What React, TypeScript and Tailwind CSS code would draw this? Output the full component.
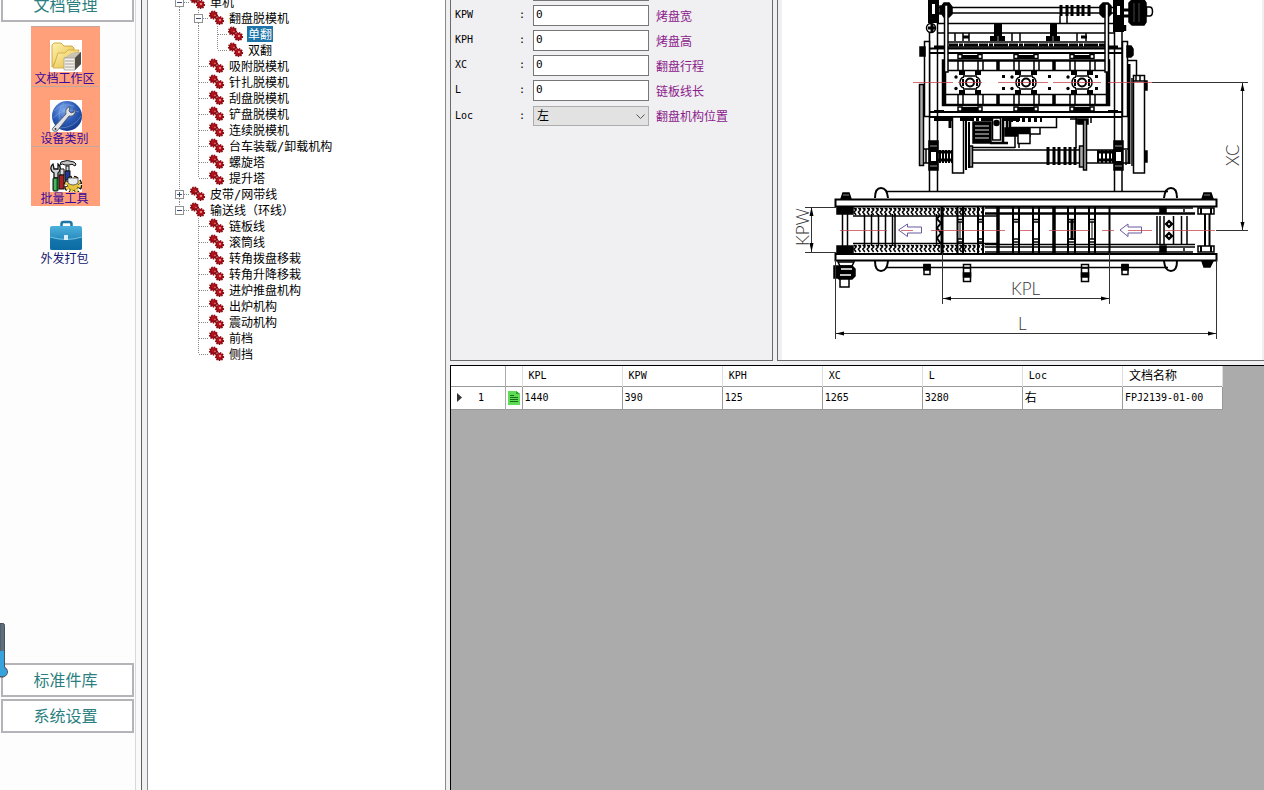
import React, { useState } from 'react';

type TreeNode = { label: string; open?: boolean; children?: TreeNode[] };

const leaf = (label: string): TreeNode => ({ label });

const tree: TreeNode[] = [
  {
    label: '单机',
    open: true,
    children: [
      { label: '翻盘脱模机', open: true, children: [leaf('单翻'), leaf('双翻')] },
      leaf('吸附脱模机'),
      leaf('针扎脱模机'),
      leaf('刮盘脱模机'),
      leaf('铲盘脱模机'),
      leaf('连续脱模机'),
      leaf('台车装载/卸载机构'),
      leaf('螺旋塔'),
      leaf('提升塔'),
    ],
  },
  { label: '皮带/网带线', open: false, children: [] },
  {
    label: '输送线（环线）',
    open: true,
    children: [
      leaf('链板线'),
      leaf('滚筒线'),
      leaf('转角拨盘移栽'),
      leaf('转角升降移栽'),
      leaf('进炉推盘机构'),
      leaf('出炉机构'),
      leaf('震动机构'),
      leaf('前档'),
      leaf('侧挡'),
    ],
  },
];

const params = [
  { name: 'KPW', hint: '烤盘宽' },
  { name: 'KPH', hint: '烤盘高' },
  { name: 'XC', hint: '翻盘行程' },
  { name: 'L', hint: '链板线长' },
];

const columns = ['KPL', 'KPW', 'KPH', 'XC', 'L', 'Loc', '文档名称'];
const rows = [['1440', '390', '125', '1265', '3280', '右', 'FPJ2139-01-00']];

/* ---------- icons ---------- */

function FolderIcon() {
  return (
    <svg viewBox="0 0 32 32" className="h-8 w-8 shrink-0 bg-white">
      <defs>
        <linearGradient id="folder" x1="0" y1="0" x2="1" y2="1">
          <stop offset="0" stopColor="#fff3b0" />
          <stop offset="1" stopColor="#e2b93c" />
        </linearGradient>
      </defs>
      <path d="M2 27V5l2-2h7l3 3h8l2 2v6H10z" fill="url(#folder)" stroke="#c79a2a" strokeWidth=".8" />
      <path d="M3 28 8 13h7l3-3h11l-4 18z" fill="url(#folder)" stroke="#cfa63a" strokeWidth=".8" />
      <path d="m14 18 9-5 8-1v12l-6 6H14z" fill="#8d867a" />
      <path d="m14 18 8-5 9-1-6 6z" fill="#c9c3b4" />
      <path d="M14 18h11v12H14z" fill="#f2f0ea" stroke="#a09a8c" strokeWidth=".7" />
      <path d="M15 21h9M15 24h9M15 27h9" stroke="#aaa499" />
      <path d="m25 18 6-6v12l-6 6z" fill="#4f4a42" />
    </svg>
  );
}

function GlobeWrenchIcon() {
  return (
    <svg viewBox="0 0 32 32" className="h-8 w-8 shrink-0 bg-white">
      <defs>
        <radialGradient id="globe" cx=".4" cy=".3" r=".8">
          <stop offset="0" stopColor="#7fa8ea" />
          <stop offset=".5" stopColor="#2c5cb8" />
          <stop offset="1" stopColor="#12337e" />
        </radialGradient>
      </defs>
      <circle cx="17" cy="16" r="15" fill="url(#globe)" />
      <path d="M4 11q8-9 20-5M3 18q12-12 26-6M10 28q14 0 21-12M14 3q-8 9-3 20" fill="none" stroke="#9fc0f2" strokeWidth=".8" opacity=".5" />
      <path d="m3 28 13-14c-1-4 1-7 4-7l-1 4 2 2 3-1 0-3c3 3 0 8-5 7L7 31c-3 1-6-1-4-3z" fill="#dfe3e8" stroke="#4c5664" strokeWidth=".9" />
      <circle cx="5.500" cy="29" r="1" fill="#333" />
    </svg>
  );
}

function ToolsIcon() {
  return (
    <svg viewBox="0 0 32 32" className="h-8 w-8 shrink-0 bg-white">
      <path d="M3 4c-3 2-3 7 1 9v5h4v-5c3-2 3-7 0-9v5H4z" fill="#cfd3d6" stroke="#111" strokeWidth="1.300" />
      <rect x="3" y="18" width="5" height="13" rx="1" fill="#1d8a34" stroke="#111" />
      <path d="M5 19v11" stroke="#7be08b" />
      <path d="M11 2q6-3 13 0l2 2-1 2q-3-3-6-1h-4q-3-2-5 0z" fill="#c4c4c4" stroke="#111" />
      <path d="M10 9h4v6h-4z" fill="#ddd" stroke="#111" />
      <rect x="9" y="15" width="5" height="14" fill="#a52323" stroke="#111" />
      <rect x="16" y="6" width="3" height="5" fill="#ddd" stroke="#111" />
      <rect x="15" y="11" width="5" height="9" fill="#23389b" stroke="#111" />
      <circle cx="23" cy="25" r="6.500" fill="none" stroke="#111" strokeWidth="5.500" strokeDasharray="3.400 1.700" />
      <circle cx="23" cy="25" r="5.500" fill="#e8c43a" stroke="#6b5207" />
      <circle cx="23" cy="25" r="6.500" fill="none" stroke="#f0d45a" strokeWidth="3" strokeDasharray="2.600 2.500" />
      <path d="M18 18v5q5 4 10 0v-5z" fill="#e9edf2" stroke="#333" strokeWidth=".7" />
    </svg>
  );
}

function BriefcaseIcon() {
  return (
    <svg viewBox="0 0 32 32" className="h-8 w-8 shrink-0">
      <defs>
        <linearGradient id="case" x1="0" y1="0" x2="0" y2="1">
          <stop offset="0" stopColor="#4db1dd" />
          <stop offset="1" stopColor="#0a6ca6" />
        </linearGradient>
      </defs>
      <path d="M11.500 7V4q0-2 2-2h6q2 0 2 2v3" fill="none" stroke="#1d77a5" strokeWidth="2.500" />
      <rect y="6" width="32" height="24" rx="2" fill="url(#case)" />
      <path d="M0 17q16 5 32 0v11q0 2-2 2H2q-2 0-2-2z" fill="#0c6ba3" opacity=".65" />
      <path d="M0 17q16 5 32 0" fill="none" stroke="#8bd3ef" strokeWidth=".8" />
      <rect x="14" y="15" width="4" height="5" fill="#d7eef8" />
    </svg>
  );
}

function GearsIcon() {
  return (
    <svg viewBox="-1 0 20 16" className="h-4 w-5 shrink-0">
      <g fill="#8a0b12" stroke="#8a0b12" strokeDasharray="1.400 1">
        <circle cx="4.500" cy="5" r="3.600" strokeWidth="2" />
        <circle cx="10.500" cy="10.500" r="3.600" strokeWidth="2" />
      </g>
      <circle cx="4.500" cy="4.500" r="2.300" fill="#b3141c" />
      <circle cx="10.500" cy="10" r="2.600" fill="#b9121b" />
      <circle cx="6" cy="5.500" r=".7" fill="#e88a8a" />
      <circle cx="11" cy="10" r=".9" fill="#f3b4b4" />
    </svg>
  );
}

function SheetIcon() {
  return (
    <svg viewBox="0 0 12 14" className="mx-auto h-[14px] w-3">
      <path d="M0 0h8l4 3v11H0z" fill="#5fdc55" />
      <path d="M8 0v3h4z" fill="#2d9c2b" />
      <path d="M2 4.500h4M2 6.500h8M2 8.500h8M2 10.500h8" stroke="#156b17" />
    </svg>
  );
}

/* ---------- sidebar ---------- */

const tools = [
  { label: '文档工作区', icon: <FolderIcon />, boxed: true },
  { label: '设备类别', icon: <GlobeWrenchIcon />, boxed: true },
  { label: '批量工具', icon: <ToolsIcon />, boxed: true },
  { label: '外发打包', icon: <BriefcaseIcon />, boxed: false },
];

function SectionButton({ children }: { children: React.ReactNode }) {
  return (
    <button className="ml-px h-[34px] w-[133px] shrink-0 border-2 border-[#b4b4b8] bg-white pt-0.5 pr-1 text-base leading-5 text-[#2b7f80]">
      {children}
    </button>
  );
}

function Sidebar() {
  return (
    <aside className="relative flex w-[142px] shrink-0 border-r border-[#606060] bg-[#fafafa]">
      <div className="flex w-[136px] flex-col border-r border-[#d8d8d8] bg-[#fdfdfd] pb-[57px]">
        <div className="-mt-3 mb-1 flex flex-col">
          <SectionButton>文档管理</SectionButton>
        </div>
        <nav className="flex flex-col items-center pr-1">
          {tools.map(t => (
            <button
              key={t.label}
              className={`flex h-[60px] w-[69px] flex-col items-center border-t pt-[13px] text-xs leading-[15px] whitespace-nowrap ${
                t.boxed ? 'border-[#c0a8a0] bg-[#ffa07a] text-[#3a0a9a]' : 'border-transparent text-[#141470]'
              }`}
            >
              {t.icon}
              <span className="pr-0.5">{t.label}</span>
            </button>
          ))}
        </nav>
        <div className="flex-1" />
        <div className="flex flex-col gap-0.5">
          <SectionButton>标准件库</SectionButton>
          <SectionButton>系统设置</SectionButton>
        </div>
      </div>
      {/* floating gauge docked on the window edge */}
      <svg viewBox="0 0 8 56" className="absolute bottom-[111px] left-0 h-14 w-2">
        <path d="M0 .5h3q1.500 0 1.500 2V44q3 1.500 3 5t-4 5H0z" fill="#5f6e7c" stroke="#46525e" />
        <path d="M0 28h4v17q3 1 3 4t-3 4H0z" fill="#36a3dc" />
      </svg>
    </aside>
  );
}

/* ---------- tree ---------- */

function Guide({ up, down, across }: { up?: boolean; down?: boolean; across?: boolean }) {
  return (
    <svg viewBox="0 0 19 16" className="h-4 w-[19px] shrink-0" stroke="#8a8a8a" strokeDasharray="1 1" shapeRendering="crispEdges">
      {up && <path d="M9.500 0V8" />}
      {down && <path d="M9.500 8v8" />}
      {across && <path d="M10 8.500h9" />}
    </svg>
  );
}

function Expander({ open, last, onToggle }: { open: boolean; last: boolean; onToggle: () => void }) {
  return (
    <button aria-label={open ? '折叠' : '展开'} onClick={onToggle} className="h-4 w-[19px] shrink-0">
      <svg viewBox="0 0 19 16" className="h-4 w-[19px]" fill="none" shapeRendering="crispEdges">
        <path d={last ? 'M9.500 0v4M14 8.500h5' : 'M9.500 0v4M9.500 13v3M14 8.500h5'} stroke="#8a8a8a" strokeDasharray="1 1" />
        <rect x="5.500" y="4.500" width="8" height="8" fill="#fff" stroke="#919191" />
        <path d={open ? 'M7 8.500h5' : 'M7 8.500h5M9.500 6v5'} stroke="#3b4a78" />
      </svg>
    </button>
  );
}

function Branch({ nodes, trail, selected, onSelect }: { nodes: TreeNode[]; trail: boolean[]; selected: string; onSelect: (s: string) => void }) {
  return (
    <ul>
      {nodes.map((n, i) => (
        <Node key={n.label} node={n} last={i === nodes.length - 1} trail={trail} selected={selected} onSelect={onSelect} />
      ))}
    </ul>
  );
}

function Node({ node, last, trail, selected, onSelect }: { node: TreeNode; last: boolean; trail: boolean[]; selected: string; onSelect: (s: string) => void }) {
  const [open, setOpen] = useState(!!node.open);
  return (
    <li>
      <div className="flex h-4 items-center">
        {trail.map((line, i) => (
          <Guide key={i} up={line} down={line} />
        ))}
        {node.children ? <Expander open={open} last={last} onToggle={() => setOpen(!open)} /> : <Guide up down={!last} across />}
        <GearsIcon />
        <button
          onClick={() => onSelect(node.label)}
          className={`h-4 px-px text-xs leading-[18px] whitespace-nowrap ${selected === node.label ? 'bg-[#1c74a8] text-white' : 'text-black'}`}
        >
          {node.label}
        </button>
      </div>
      {open && node.children && <Branch nodes={node.children} trail={[...trail, !last]} selected={selected} onSelect={onSelect} />}
    </li>
  );
}

/* ---------- parameter form ---------- */

const inputClass = 'h-[21px] w-[116px] border border-[#767676] bg-white px-0.5 pb-0.5 text-[11px] text-black outline-none';

function ParamForm() {
  return (
    <form className="w-[323px] shrink-0 overflow-hidden border border-t-0 border-[#6a6a6a] bg-[#f0eff2] pl-1">
      <div className="-mt-[22px]">
        <div className="flex h-[25px] items-center pl-[78px]">
          <input aria-label="KPL" className={inputClass} />
        </div>
        {params.map(p => (
          <div key={p.name} className="flex h-[25px] items-center text-[10px]">
            <label htmlFor={p.name} className="w-16 pb-0.5">{p.name}</label>
            <span className="w-[14px] pb-0.5">:</span>
            <input id={p.name} defaultValue="0" className={inputClass} />
            <span className="ml-[7px] pt-[3px] text-xs text-[#8b1a8b]">{p.hint}</span>
          </div>
        ))}
        <div className="flex h-[25px] items-center text-[10px]">
          <label htmlFor="Loc" className="w-16">Loc</label>
          <span className="w-[14px]">:</span>
          <div className="relative">
            <select id="Loc" className="block h-5 w-[116px] appearance-none border border-[#adadad] bg-[#e2e2e2] pt-px pl-[3px] text-xs leading-4 text-black">
              <option>左</option>
              <option>右</option>
            </select>
            <svg viewBox="0 0 9 5" className="pointer-events-none absolute top-2 right-1 h-[5px] w-[9px]" fill="none" stroke="#555">
              <path d="m.5.500 4 4 4-4" />
            </svg>
          </div>
          <span className="ml-[7px] pt-[3px] text-xs text-[#8b1a8b]">翻盘机构位置</span>
        </div>
      </div>
    </form>
  );
}

/* ---------- machine drawing ---------- */

const rollers = [970, 1026, 1082];

// vertical strokes as one path
const bars = (xs: number[], y1: number, y2: number) => xs.map(x => `M${x} ${y1}V${y2}`).join('');

const chain = (y: number) => {
  let d = '';
  for (let x = 854; x < 984; x += 4.4) d += `M${x} ${y}l2 2-2 2 2 3M${x + 2} ${y}v2`;
  return d;
};

function Roller({ x }: { x: number }) {
  return (
    <g transform={`translate(${x} 0)`}>
      <path d={bars([-12, -7, 8, 13], 60, 70) + bars([-12, -7, 8, 13], 94, 105)} />
      <path d="M-10 57h20M-10 109h20" strokeWidth="4" />
      <path d="M-12 54.500h4v4h-4zM8 54.500h4v4H8zM-12 107h4v4h-4zM8 107h4v4H8z" fill="#fff" />
      <path d="M-11 70h6v5h-6zM5 70h6v5H5zM-11 90h6v5h-6zM5 90h6v5H5z" fill="#000" stroke="none" />
      <path d="M-6 77q-4 1-4 5.500t4 5.500M6 77q4 1 4 5.500t-4 5.500M-7 76h14M-7 89h14" />
      <circle cy="82.500" r="4" fill="#fff" strokeWidth="2" />
      <path d="M-7 79v7M7 79v7" strokeWidth="2" />
      <g fill="#000" stroke="none">
        <circle cx="-14" cy="77" r="1.700" />
        <circle cx="-14" cy="88.500" r="1.700" />
      </g>
    </g>
  );
}

function FrontView() {
  return (
    <g fill="none" stroke="#000" strokeWidth="1.500">
      {/* columns */}
      <path d={bars([929.5, 937.5, 1114.5, 1122], 0, 191)} />
      <path d="M928 0h11v23h-11zM1113 0h11v32h-11z" fill="#000" stroke="none" />
      <path d="M932 4h3v10h-3zM1117 6h3v9h-3z" fill="#fff" stroke="none" />
      {/* top shaft */}
      <path d="M938 7.500h176M938 13h176M938 23.500h176M938 33h176" />
      <path d="M940 6h2l2-3h5l3 4v7l-3 3h-5l-2-3h-2zM1100 6l3-3h5l3 3v8l-3 3h-5l-3-3z" fill="#000" />
      <path d={bars([1061, 1067, 1072, 1078, 1083, 1089], 5, 16)} strokeWidth="3" />
      <path d="M1060 16v7M1067 16v7" />
      <circle cx="931" cy="28" r="4.500" fill="#fff" />
      <path d="M928 28h8M932 24v8" strokeWidth="3" />
      {/* motor on the right */}
      <path d="M1123 10h6M1123 16h6" strokeWidth="3" />
      <path d="M1129 3l3-3h12l2 3v19l-2 3h-12l-3-3z" fill="#000" />
      <path d={bars([1134, 1139], 3, 22)} stroke="#777" strokeWidth=".6" />
      <path d="M1146.500 7h3q3 0 3 4.500t-3 4.500h-3z" />
      <path d="M1116 28h10M1118 25v6M1125 25v6" strokeWidth="2.500" />
      {/* cross beam */}
      <path d={bars([955, 963, 969, 1012, 1020, 1077, 1086], 33, 41)} />
      <path d="M963 37h6M1081 37h6" strokeWidth="3" />
      <path d="M994 24h8v12h3v5h-15v-5h4zM1050 24h7v12h3v5h-14v-5h4z" fill="#000" stroke="none" />
      <path d="M998 36v5M1053 36v5" stroke="#fff" strokeWidth=".6" />
      <path d="M947 42h159M947 47h159" />
      <path d="M949 45h157" strokeWidth="3" strokeDasharray="9 1 4 1 14 1" />
      <path d="M929 48.500h193M929 53h193M934 46.500h11M1108 46.500h10" strokeWidth="2" />
      <path d="M934 46h10v3h-10zM934 110h10v3h-10zM1108 46h10v3h-10zM1108 110h10v3h-10z" fill="#000" stroke="none" />
      {/* side plates */}
      <path d="M924.500 41.500h5v75h-5zM1122.500 41.500h5v75h-5z" fill="#fff" />
      <path d="M920 47h5v9h-5zM1127 46h4l2 3v6l-2 2h-4z" fill="#000" />
      <path d="M919.500 84.500h4v81h-4z" fill="#aaa" />
      <path d="M923 149h6M923 163h6M926 149v14" />
      {/* tray frame */}
      <path d="M943 60.500h166v44.500H943z" strokeWidth="2.500" />
      <path d="M943 70.500h166M943 94.500h166" />
      <path d={bars([945, 1107], 60, 105)} strokeWidth="2.500" />
      <path d={bars([998, 1054], 60, 70) + bars([998, 1054], 94, 105)} strokeWidth="3.500" />
      {rollers.map(x => (
        <Roller key={x} x={x} />
      ))}
      <g fill="#000" stroke="none">
        {[1003, 1049, 1096].map(x => (
          <path key={x} d={`M${x - 1} 75h3v3h-3zM${x - 1} 87h3v3h-3z`} />
        ))}
      </g>
      <path d="M944.500 5h3.500v67h-3.500zM1105 4h3.500v68h-3.500z" fill="#fff" />
      <path d="M929 112h193M929 117h193" strokeWidth="2" />
      {/* left wheel */}
      <path d="M934 118h18v3h-18z" fill="#000" stroke="none" />
      <path d="M950 118v10" strokeWidth="3" />
      <path d="M952.500 117h11v56h-11z" fill="#fff" />
      <path d="M966 120v50M969 122v46" strokeWidth="2" />
      <path d="M969.500 146h3v21h-3z" fill="#aaa" />
      {/* gear motor */}
      <path d="M960 119h60" strokeWidth="4" strokeDasharray="14 2 3 2" />
      <path d="M973 122h18v21h-18z" fill="#000" />
      <path d="M975 126h14M975 130h14M975 134h14M975 138h14" stroke="#ddd" strokeWidth="1" />
      <path d="M992.500 118h8v22h-8z" fill="#fff" />
      <circle cx="996.500" cy="123" r="2.500" fill="#000" />
      <path d="M990 143h18M1003 118v24M1007 118v18M1010 118v10" strokeWidth="2.500" />
      <path d="M1010 127.500h46.500V118M1040 127v7h-9" />
      <path d="M1005 128h25v8h-25z" fill="#000" />
      <path d="M1018 133.500h12v10h-12z" fill="#fff" />
      <path d="M1015 136v12M1019 143v5" />
      <path d="M1010 120h32" strokeWidth="4" strokeDasharray="3 3" />
      {/* lower shaft */}
      <path d="M972 147.500h43M972 150h142M972 163h142" />
      <path d={bars([1048, 1054, 1059, 1065, 1070, 1075], 147, 165)} strokeWidth="3" />
      <path d="M1070 119h7v5M1076 118v30M1091 118v5" />
      <path d="M1078 119h10v5h-10z" fill="#000" />
      <path d="M1079.500 146h4v21h-4zM1083.500 120h3v50h-3z" fill="#aaa" />
      <path d={bars([940, 943, 946, 949, 952, 1098, 1102, 1106, 1110, 1113], 150, 163)} strokeWidth="2" />
      <path d="M938 152h14M938 160h14M1098 152h16M1098 160h16" strokeWidth="3" />
      <path d="M929 141h9v29h-9zM1114 141h9v29h-9z" fill="#000" />
      <path d="M931 152h5v9h-5zM1116 152h5v9h-5z" fill="#fff" stroke="none" />
      <path d="M930 146h7M930 166h7M1115 146h7M1115 166h7" stroke="#999" strokeWidth="1" />
      {/* right wheel */}
      <path d="M1128 60.500h8.500V76M1123 149h5M1123 163h5" />
      <path d="M1129 64v100" strokeWidth="3" />
      <path d="M1132 78v88M1126 150v15" />
      <path d="M1133.500 75.500h11v97.500h-11z" fill="#fff" />
      <path d="M1133 81h12M1136 76v5M1140 76v5" />
      <path d="M1145 81h2v9h-2zM1145 151h2v11h-2z" fill="#000" />
    </g>
  );
}

function TopView() {
  return (
    <g fill="none" stroke="#000" strokeWidth="1.500">
      <path d="M887 191.500h281M887 267.500h281" />
      {/* hooks at the corners */}
      <path
        d="M875 198q0-10 6-10t7 10M1164 198q1-10 7-10t6 10M875 261q0 10 6 10t7-10M1164 261q1 10 7 10t6-10"
        strokeWidth="2"
      />
      {/* feet */}
      {[924, 1122].map(x => (
        <g key={x}>
          <path d={`M${x} 264.500h6v10h-6z`} />
          <path d={`M${x} 265h6v5h-6z`} fill="#000" />
        </g>
      ))}
      {[963.5, 1081.5].map(x => (
        <g key={x}>
          <path d={`M${x} 264.500h7v17h-7zM${x} 268h7`} />
          <path d={`M${x} 273h7v4h-7z`} fill="#000" />
        </g>
      ))}
      {/* side rails */}
      <path d="M835.500 199.500h381v7h-381zM835.500 254h381v6.500h-381z" fill="#fff" strokeWidth="2" />
      <path d="M841 199l2-6h6l2 6zM1202 199l2-6h7l2 6zM1202 261h11l-3 6h-6z" fill="#000" />
      <path d="M843 195h6M1204 195h6" stroke="#888" strokeWidth="1" />
      {/* drive unit */}
      <path d="M838 262h16l-2 4h-12z" fill="#fff" />
      <path d="M834 266h4v12h-4zM839 266h13l3 3v7l-3 3h-13l-3-4v-5z" fill="#000" />
      <path d="M841 269h11M840 275h11" stroke="#fff" />
      <path d="M840 279h9v8h-9z" fill="#fff" />
      {/* chains */}
      <path d="M837 207h16v7h-16zM837 246h16v7h-16z" fill="#000" />
      <path d={chain(208) + chain(245)} />
      <path d="M853 216h145M853 243.500h145" />
      <path d="M985 208h208M985 252h208" />
      <path d="M985 213.500h210" strokeWidth="2.500" />
      <path d="M985 244.500h210M985 247h210" strokeWidth="1.500" />
      {/* cross members */}
      <path d={bars([842.5, 847.5, 864.5, 871.5, 878.5, 885.5, 892.5, 895, 936.5], 214, 246)} />
      <path d="M940 215l-3 4 4 4-4 5 4 5-4 5 4 6" strokeWidth="2" />
      <path d="M942 207v46" strokeWidth="3" />
      <path d={bars([957.5, 963, 978, 983, 1013, 1019, 1033, 1039, 1068, 1075, 1089, 1095], 207, 253)} strokeWidth="2" />
      <path d={bars([998, 1054], 207, 253)} strokeWidth="3.500" />
      {[957, 977, 1013, 1033, 1068, 1089].map(x => (
        <path key={x} d={`M${x} 219.500h6M${x} 222h6M${x} 239h6M${x} 242h6`} />
      ))}
      <path d="M960 222v17M1092 222v17" strokeWidth="1" />
      <path d="M1072 220v20" strokeWidth="3" />
      <path d="M1109.500 207v46" strokeWidth="2" />
      <path d={bars([1157, 1160, 1164, 1173.5, 1181.5, 1187], 216, 244)} />
      <path d="M1160 208h6v5h-6zM1160 246h6v6h-6z" fill="#000" />
      <path d="M1169 220.500l3.500 3.500-3.500 3.500-3.500-3.500zM1169 232.500l3.500 3.500-3.500 3.500-3.500-3.500z" fill="#000" />
      <path d="M1168 224h2M1168 236h2" stroke="#fff" />
      <path d="M1184 209v3M1184 248v3" />
      <path d="M1198 208h16v6h-16zM1198 246h16v6h-16z" />
      <path d="M1201 208v6M1211 208v6M1201 246v6M1211 246v6M1205 214v32M1209.500 214v32" strokeWidth="2" />
      {/* travel direction */}
      <path d="M898.500 230l9-6v3h14v6h-14v3.500zM1120 230l8-6v3h13.500v6H1128v3.500z" fill="#fff" stroke="#6a5aa0" strokeWidth="1" />
    </g>
  );
}

function Dimensions() {
  return (
    <g>
      <path
        d="M913 82.500h40M958 82.500h24M998 82.500h50M1053 82.500h48M1108 82.500h44M840 230.500h47M901 230.500h12M931 230.500h74M1020 230.500h12M1049 230.500h40M1102 230.500h12M1128 230.500h24M1165 230.500h50"
        stroke="#c8414b"
        fill="none"
        opacity=".75"
      />
      <path
        d="M1152 82.500h96M1216 230.500h32M1242.500 83v147M811.500 207v46M805 207.500h32M805 252.500h32M942.500 253v51M1109.500 253v51M942 298.500h168M835.500 260v79M1216.500 260v79M835 333.500h381"
        stroke="#333"
        fill="none"
      />
      <path
        d="M1242.500 83l2 8h-4zM1242.500 230l2-8h-4zM811.500 207l2 9h-4zM811.500 252l2-9h-4zM943 298.500l8-2v4zM1109 298.500l-8-2v4zM836 333.500l8-2v4zM1216 333.500l-8-2v4z"
        fill="#000"
      />
      <g fill="#333" className="font-['Lato'] text-[17px] font-light">
        <text x="1011" y="295">KPL</text>
        <text x="1018" y="330">L</text>
        <text transform="translate(809 246) rotate(-90)">KPW</text>
        <text transform="translate(1239 166) rotate(-90)">XC</text>
      </g>
    </g>
  );
}

function Drawing() {
  return (
    <section className="min-w-0 flex-1 border-b border-l border-[#6a6a6a] bg-[#f0eff2] pr-0.5 pl-1">
      <svg viewBox="782 0 480 360" className="block h-auto w-full bg-white">
        <FrontView />
        <TopView />
        <Dimensions />
      </svg>
    </section>
  );
}

/* ---------- result grid ---------- */

function ResultGrid() {
  return (
    <section className="flex-1 border-t border-l border-black bg-[#ababab]">
      <table className="w-[772px] table-fixed border-collapse bg-white text-left text-[10px]">
        <colgroup>
          <col className="w-[54px]" />
          <col className="w-[17px]" />
          {columns.map(c => (
            <col key={c} className="w-[100px]" />
          ))}
        </colgroup>
        <thead>
          <tr className="h-5 border-b border-[#999]">
            <th className="border-r border-[#aaa]" />
            <th className="border-r border-[#ddd]" />
            {columns.map(c => (
              <th key={c} className={`border-r border-[#ddd] p-0 pl-1.5 leading-4 font-normal ${c.length > 3 ? 'text-xs' : ''}`}>
                {c}
              </th>
            ))}
          </tr>
        </thead>
        <tbody>
          {rows.map((r, i) => (
            <tr key={i} className="h-[23px] border-b border-[#999]">
              <th className="border-r border-[#aaa] p-0 font-normal">
                <div className="flex items-center gap-4 pl-1.5">
                  <svg viewBox="0 0 5 9" className="h-[9px] w-[5px]">
                    <path d="M0 0l5 4.500L0 9z" fill="#333" />
                  </svg>
                  {i + 1}
                </div>
              </th>
              <td className="border-r border-[#999] p-0">
                <SheetIcon />
              </td>
              {r.map((v, j) => (
                <td key={j} className={`border-r border-[#999] p-0 pl-0.5 leading-4 ${columns[j] === 'Loc' ? 'text-xs' : ''}`}>
                  {v}
                </td>
              ))}
            </tr>
          ))}
        </tbody>
      </table>
    </section>
  );
}

function App() {
  const [selected, setSelected] = useState('单翻');

  return (
    <div className="flex h-screen overflow-hidden bg-[#f0eff2] font-['DejaVu_Sans_Mono','Noto_Sans_CJK_SC',sans-serif] text-black">
      <Sidebar />
      <div className="ml-[5px] w-[299px] shrink-0 overflow-hidden border-x border-[#8a8a8a] bg-white pl-[22px]">
        <div className="-mt-1.5">
          <Branch nodes={tree} trail={[]} selected={selected} onSelect={setSelected} />
        </div>
      </div>
      <main className="flex min-w-0 flex-1 flex-col gap-1 pl-1">
        <div className="flex gap-1">
          <ParamForm />
          <Drawing />
        </div>
        <ResultGrid />
      </main>
    </div>
  );
}

export default App;
